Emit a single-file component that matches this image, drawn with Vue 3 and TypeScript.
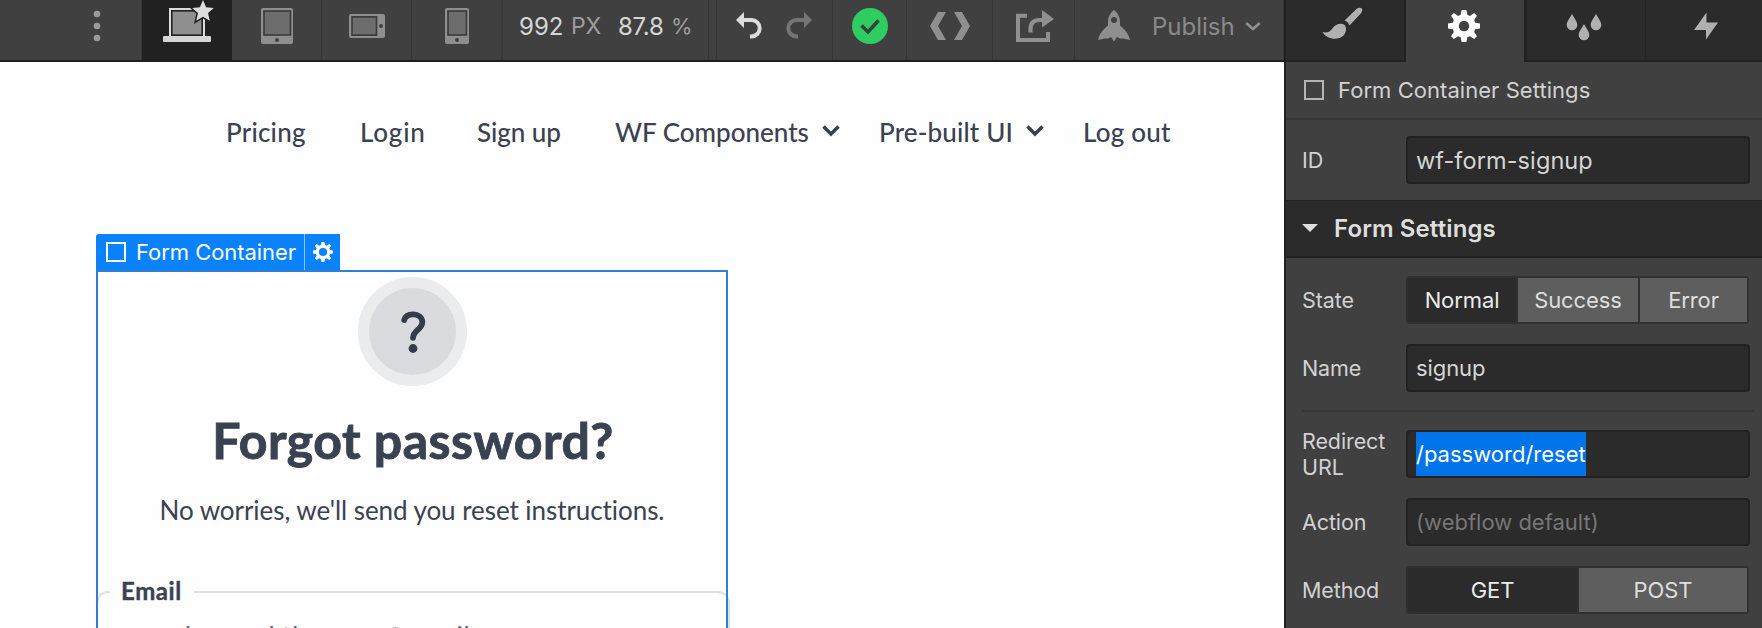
<script setup lang="ts">
interface NavItem {
  label: string
  menu: boolean
}

const navItems: NavItem[] = [
  { label: 'Pricing', menu: false },
  { label: 'Login', menu: false },
  { label: 'Sign up', menu: false },
  { label: 'WF Components', menu: true },
  { label: 'Pre-built UI', menu: true },
  { label: 'Log out', menu: false },
]

const cog =
  'M10.2 0h3.6l.7 3.6 2 .85L19.6 2.3l2.1 2.1-2.1 3.1.85 2L24 10.2v3.6l-3.55.7-.85 2 2.1 3.1-2.1 2.1-3.1-2.1-2 .85-.7 3.55h-3.6l-.7-3.55-2-.85-3.1 2.1-2.1-2.1 2.1-3.1-.85-2L0 13.8v-3.6l3.55-.7.85-2-2.1-3.1 2.1-2.1 3.1 2.15 2-.85z'
</script>

<template>
  <div class="designer">
    <main class="workspace">
      <header class="toolbar">
        <div class="cell more">
          <svg viewBox="0 0 142 60" width="142" height="60" fill="#9a9a9a">
            <circle cx="97" cy="14" r="3.3" /><circle cx="97" cy="26" r="3.3" /><circle cx="97" cy="38" r="3.3" />
          </svg>
        </div>
        <div class="cell device active">
          <svg viewBox="143 0 89 60" width="89" height="60">
            <rect x="170" y="9" width="34" height="28" fill="#8f8f8f" stroke="#dcdcdc" stroke-width="2" />
            <rect x="171.8" y="10.8" width="30.4" height="24.4" fill="none" stroke="#212121" stroke-width="1.6" />
            <rect x="163" y="36" width="48" height="6" rx="1" fill="#d6d6d6" />
            <path d="M203 0l3.1 7.3 7.7.7-5.8 5 1.8 7.8-6.8-4.1-6.8 4.1 1.8-7.8-5.8-5 7.7-.7z" fill="#dedede" stroke="#212121" stroke-width="3" paint-order="stroke" />
          </svg>
        </div>
        <div class="cell device">
          <svg viewBox="232 0 90 60" width="90" height="60">
            <rect x="261" y="8" width="32" height="36" rx="2" fill="#8e8e8e" />
            <rect x="264" y="11" width="26.5" height="24" fill="#6d6d6d" stroke="#3a3a3a" stroke-width="1.6" />
            <circle cx="277" cy="40" r="2" fill="#404040" />
          </svg>
        </div>
        <div class="cell device">
          <svg viewBox="322 0 90 60" width="90" height="60">
            <rect x="349" y="14" width="36" height="24" rx="2" fill="#8e8e8e" />
            <rect x="352" y="16.8" width="24.5" height="18.4" fill="#6d6d6d" stroke="#3a3a3a" stroke-width="1.6" />
            <circle cx="381" cy="26" r="2" fill="#404040" />
          </svg>
        </div>
        <div class="cell device">
          <svg viewBox="412 0 90 60" width="90" height="60">
            <rect x="445" y="8" width="24" height="36" rx="2" fill="#8e8e8e" />
            <rect x="448" y="11" width="18.4" height="24" fill="#6d6d6d" stroke="#3a3a3a" stroke-width="1.6" />
            <circle cx="457" cy="40" r="2" fill="#404040" />
          </svg>
        </div>
        <div class="cell readout">
          <span>992</span><span class="unit">PX</span><span class="zoom">87.8</span><span class="percent">%</span>
        </div>
        <div class="cell history">
          <svg viewBox="717 0 116 60" width="116" height="60">
            <path d="M736 20l8-8v16z" fill="#dcdcdc" />
            <path d="M743 20h8.500a8.200 8.200 0 0 1 0 16.400h-1.500" fill="none" stroke="#dcdcdc" stroke-width="4" />
            <path d="M812 20l-8-8v16z" fill="#757575" />
            <path d="M805 20h-8.500a8.200 8.200 0 0 0 0 16.400h1.500" fill="none" stroke="#757575" stroke-width="4" />
          </svg>
        </div>
        <div class="cell status">
          <svg viewBox="833 0 74 60" width="74" height="60">
            <circle cx="870" cy="26" r="18" fill="#2fcc62" />
            <path d="M861.500 25.500l6.500 6.500 10.500-11.500" fill="none" stroke="#34443a" stroke-width="3.600" />
          </svg>
        </div>
        <div class="cell code">
          <svg viewBox="907 0 86 60" width="86" height="60" fill="#8f8f8f">
            <path d="M938 12h8l-8 14 8 14h-8l-8-14z" /><path d="M962 12h-8l8 14-8 14h8l8-14z" />
          </svg>
        </div>
        <div class="cell share">
          <svg viewBox="993 0 82 60" width="82" height="60">
            <path d="M1027 15.800h-9v24.200h30v-8" fill="none" stroke="#8f8f8f" stroke-width="4" />
            <path d="M1030.500 32.500v-3.500q0-9 9-9h4" fill="none" stroke="#8f8f8f" stroke-width="4.200" />
            <path d="M1042 10l12 9-12 8.500z" fill="#8f8f8f" />
          </svg>
        </div>
        <div class="cell publish">
          <svg viewBox="0 0 40 60" width="40" height="60">
            <path
              fill-rule="evenodd"
              d="M22 10c3.500 2.800 6 7 6 12v3.500c4 3.500 8.500 7.500 10 14.500-3.500-1-7-1.800-10-1.500l-3-1.500-3 4.500-3-4.500-3 1.500c-3-.3-6.500.5-10 1.500 1.500-7 6-11 10-14.500V22c0-5 2.500-9.200 6-12zm0 7a3 3 0 1 0 0 6 3 3 0 0 0 0-6z"
              fill="#8f8f8f"
            />
          </svg>
          <span>Publish</span>
          <svg class="caret" viewBox="0 0 16 60" width="16" height="60">
            <path d="M1.200 23l6.800 6 6.800-6" fill="none" stroke="#8f8f8f" stroke-width="2.600" />
          </svg>
        </div>
      </header>

      <section class="canvas">
        <nav class="site-nav">
          <a v-for="item in navItems" :key="item.label">
            <span>{{ item.label }}</span>
            <svg v-if="item.menu" viewBox="0 0 18 12" width="18" height="12">
              <path d="M1.500 1.500l7.500 7.500 7.500-7.500" fill="none" stroke="#3a4252" stroke-width="3.600" />
            </svg>
          </a>
        </nav>

        <div class="selection">
          <div class="tag">
            <i class="square"></i>
            <span class="tag-name">Form Container</span>
            <span class="tag-cog">
              <svg viewBox="0 0 24 24" width="20" height="20">
                <path :d="cog" fill="#fff" /><circle cx="12" cy="12" r="4.900" fill="#0a82fb" />
              </svg>
            </span>
          </div>
          <div class="form-box">
            <div class="badge">
              <svg viewBox="0 0 40 50" width="40" height="50">
                <path d="M11.200 13C12.200 9.200 15.500 7.300 19.800 7.300c5.500 0 9.500 3.300 9.500 7.900 0 7-9.300 8.500-9.300 15.600" fill="none" stroke="#343c4c" stroke-width="5.800" stroke-linecap="round" />
                <circle cx="20" cy="41.500" r="4.400" fill="#343c4c" />
              </svg>
            </div>
            <h1>Forgot password?</h1>
            <p>No worries, we'll send you reset instructions.</p>
            <div class="field">
              <label>Email</label>
              <div class="placeholder">e.g. howard.thurman@gmail.com</div>
            </div>
          </div>
        </div>
      </section>
    </main>

    <aside class="panel">
      <div class="tabs">
        <div class="tab">
          <svg viewBox="1286 0 118 60" width="118" height="60" fill="#b0b0b0">
            <path d="M1344.500 20.500L1356.500 9c2-1.600 4.300-1.600 5.300-.4 1 1.200.3 3-.8 4.600L1349.500 25.500q-1.500-4-5-5z" />
            <path d="M1322.500 32c3.500 1 7 .5 9.500-3 2.500-4.500 8-6.500 12-4.500 3 2 2.500 8-.5 11-5.500 5.500-17 4-21-3.500z" />
          </svg>
        </div>
        <div class="tab selected">
          <svg viewBox="1406 0 118 60" width="118" height="60">
            <svg x="1448" y="10" width="32" height="32" viewBox="0 0 24 24">
              <path :d="cog" fill="#fff" /><circle cx="12" cy="12" r="3.900" fill="#404040" />
            </svg>
          </svg>
        </div>
        <div class="tab">
          <svg viewBox="1527 0 118 60" width="118" height="60" fill="#b0b0b0">
            <path d="M1572 14c2.500 4.500 5.300 7.500 5.300 11a5.300 5.300 0 0 1-10.600 0c0-3.500 2.800-6.500 5.300-11z" />
            <path d="M1596 14c2.500 4.500 5.300 7.500 5.300 11a5.300 5.300 0 0 1-10.600 0c0-3.500 2.800-6.500 5.300-11z" />
            <path d="M1584 24c2.500 4.500 5.300 7.500 5.300 11a5.300 5.300 0 0 1-10.600 0c0-3.500 2.800-6.500 5.300-11z" />
          </svg>
        </div>
        <div class="tab">
          <svg viewBox="1646 0 116 60" width="116" height="60" fill="#b0b0b0">
            <path d="M1706.500 12.500v10h11.500l-12 17v-9.500h-12z" />
          </svg>
        </div>
      </div>

      <div class="title"><i class="square"></i><span>Form Container Settings</span></div>

      <div class="row id-row"><label>ID</label><div class="input large">wf-form-signup</div></div>

      <div class="section-head"><i class="triangle"></i><span>Form Settings</span></div>

      <div class="rows">
        <div class="row">
          <label>State</label>
          <div class="segments state">
            <span class="on">Normal</span><span>Success</span><span>Error</span>
          </div>
        </div>
        <div class="row"><label>Name</label><div class="input">signup</div></div>
        <div class="row split">
          <label>Redirect URL</label>
          <div class="input"><mark>/password/reset</mark></div>
        </div>
        <div class="row"><label>Action</label><div class="input empty">(webflow default)</div></div>
        <div class="row">
          <label>Method</label>
          <div class="segments method"><span class="on">GET</span><span>POST</span></div>
        </div>
      </div>
    </aside>
  </div>
</template>

<style>
html,
body {
  overflow: hidden;
}
</style>

<style scoped>
* {
  box-sizing: border-box;
}
svg {
  display: block;
  flex: none;
}
.designer {
  display: flex;
  width: 1762px;
  height: 628px;
  overflow: hidden;
  font-family: Inter, 'Liberation Sans', sans-serif;
}
.workspace {
  width: 1284px;
  display: flex;
  flex-direction: column;
}

.toolbar {
  display: grid;
  grid-template-columns: 142px 90px 90px 90px 90px 215px 116px 74px 86px 82px 209px;
  height: 62px;
  flex: none;
  background: #404040;
  border-bottom: 2px solid #201f21;
}
.cell {
  height: 60px;
  border-right: 1px solid #373737;
  overflow: hidden;
}
.device.active {
  background: #212121;
  border-right: 0;
  padding-left: 1px;
}
.readout {
  display: grid;
  grid-template-columns: 52px 47px 55px 1fr;
  width: 215px;
  height: 60px;
  padding: 0 0 8px 16px;
  align-items: center;
  font-size: 24px;
  color: #d6d6d6;
  border-left: 1px solid #373737;
  box-shadow: inset -7px 0 #404040, inset -8px 0 #373737;
}
.readout .unit {
  font-size: 23px;
  letter-spacing: -0.3px;
  color: #9c9c9c;
}
.readout .zoom {
  letter-spacing: -0.3px;
}
.readout .percent {
  font-size: 22px;
  margin-left: -2px;
  color: #9c9c9c;
}
.publish {
  display: flex;
  padding-left: 17px;
  font-size: 24px;
  line-height: 53px;
  color: #8a8a8a;
}
.publish span {
  margin-left: 20px;
}
.caret {
  margin-left: 10px;
}

.canvas {
  flex: 1;
  min-height: 0;
  background: #fefefe;
  font-family: Lato, 'Open Sans', sans-serif;
  color: #3a4252;
}
.site-nav {
  display: grid;
  grid-template-columns: 134px 117px 138px 264px 204px 1fr;
  height: 140px;
  padding-left: 226px;
  align-items: center;
  font-size: 26px;
}
.site-nav a {
  display: flex;
  align-items: center;
  gap: 13px;
  font-weight: 500;
  letter-spacing: 0.2px;
  white-space: nowrap;
}
.site-nav a svg {
  margin-top: -2px;
}
.site-nav a:nth-child(2) {
  letter-spacing: 0.8px;
}
.site-nav a:nth-child(3) {
  letter-spacing: -0.05px;
}
.site-nav a:nth-child(4) {
  letter-spacing: 0;
}
.site-nav a:nth-child(5) {
  letter-spacing: 0.15px;
}

.selection {
  width: 632px;
  margin: 32px 0 0 96px;
}
.tag {
  display: flex;
  align-items: center;
  width: 244px;
  height: 36px;
  background: #0a82fb;
  border-radius: 3px 0 0 0;
  color: #fff;
  font-family: Inter, 'Liberation Sans', sans-serif;
  font-size: 22px;
}
.square {
  flex: none;
  width: 20px;
  height: 20px;
  border: 2px solid #fff;
}
.tag .square {
  margin-left: 10px;
}
.tag-name {
  width: 168px;
  margin-left: 10px;
  letter-spacing: -0.05px;
  white-space: nowrap;
}
.tag-cog {
  flex: 1;
  height: 36px;
  display: flex;
  align-items: center;
  justify-content: center;
  border-left: 1.5px solid #8cc4fd;
}
/* The outline is drawn above the contents, so it stays over the field's edge. */
.form-box {
  position: relative;
  height: 420px;
  padding-top: 2px;
  display: flex;
  flex-direction: column;
  align-items: center;
}
.form-box::after {
  content: '';
  position: absolute;
  inset: 0;
  border: 2px solid #2f80d3;
}
.badge {
  flex: none;
  width: 109px;
  height: 109px;
  margin: 5px 0 0 1px;
  border: 11px solid #ebecee;
  border-radius: 50%;
  background: #d9dbde;
  display: flex;
  align-items: center;
  justify-content: center;
}
h1 {
  margin: 24px 0 0 2px;
  font-size: 50px;
  line-height: 60px;
  font-weight: 700;
  letter-spacing: 0.5px;
  white-space: nowrap;
  -webkit-text-stroke: 0.9px #3a4252;
}
p {
  margin: 24px 0 0;
  font-size: 26px;
  line-height: 32px;
  letter-spacing: -0.06px;
  white-space: nowrap;
}
.field {
  width: 634px;
  height: 80px;
  flex: none;
  margin: 65px 0 0 2px;
  border: 2px solid #dfe0e1;
  border-radius: 12px;
  padding-left: 12px;
}
.field label {
  display: block;
  width: 84px;
  height: 30px;
  margin-top: -17px;
  padding-left: 11px;
  line-height: 30px;
  font-size: 24px;
  font-weight: 700;
  letter-spacing: 0.6px;
  -webkit-text-stroke: 0.4px #3a4252;
  background: #fefefe;
}
.placeholder {
  margin: 15px 0 0 25px;
  font-size: 26px;
  line-height: 30px;
  letter-spacing: 0.75px;
  color: #5d6470;
}

.panel {
  width: 478px;
  border-left: 2px solid #212121;
  background: #404040;
  color: #d2d2d2;
  font-size: 21.5px;
}
.tabs {
  display: grid;
  grid-template-columns: 118px 122px 119px 117px;
  height: 62px;
}
.tab {
  background: #2b2b2b;
  border-bottom: 2px solid #212121;
  height: 62px;
  overflow: hidden;
}
.tab + .tab {
  border-left: 1px solid #242424;
}
.tab.selected {
  background: #404040;
  border: solid #212121;
  border-width: 0 2px 0 2px;
}
.title {
  display: flex;
  align-items: center;
  height: 58px;
  padding: 0 0 0 18px;
  gap: 14px;
  border-bottom: 2px solid #383838;
  font-size: 22px;
  letter-spacing: 0.05px;
  white-space: nowrap;
}
.title .square {
  border-color: #b5b5b5;
}
.row {
  display: grid;
  grid-template-columns: 104px 344px;
  height: 48px;
  margin-left: 16px;
  align-items: center;
  letter-spacing: -0.1px;
}
.row label {
  width: 90px;
  line-height: 26px;
}
.id-row {
  margin-top: 16px;
}
.input {
  display: flex;
  align-items: center;
  height: 48px;
  padding: 0 8px;
  border: 2px solid #222;
  border-radius: 4px;
  background: #2b2b2b;
  color: #d6d6d6;
  font-size: 22px;
}
.input.large {
  font-size: 23.5px;
  letter-spacing: 0.1px;
}
.input.empty {
  color: #767676;
  letter-spacing: 0;
}
mark {
  height: 44px;
  line-height: 44px;
  letter-spacing: 0;
  background: #0074e8;
  color: #fff;
}
.section-head {
  display: flex;
  align-items: center;
  height: 58px;
  margin-top: 16px;
  padding: 0 0 1px 16px;
  background: #2b2b2b;
  border: solid #212121;
  border-width: 1px 0 2px;
  font-size: 24px;
  font-weight: 600;
  letter-spacing: 0.1px;
  color: #dedede;
}
.triangle {
  border: 8px solid transparent;
  border-top-color: #dedede;
  border-bottom: 0;
  margin-right: 16px;
}
.rows {
  display: flex;
  flex-direction: column;
  gap: 20px;
  padding-top: 18px;
}
.split {
  height: 68px;
  margin: -2px 8px 0 16px;
  border-top: 2px solid #383838;
  align-items: start;
  padding-top: 18px;
}
.split label {
  margin-top: -2px;
}
.segments {
  display: grid;
  width: 343px;
  height: 48px;
  padding: 2px;
  gap: 2px;
  background: #303030;
  border-radius: 4px;
  color: #dedede;
}
.state {
  grid-template-columns: 108px 120px 1fr;
}
.method {
  grid-template-columns: 169px 1fr;
}
.segments span {
  display: flex;
  align-items: center;
  justify-content: center;
  background: #5e5e5e;
  font-size: 22px;
}
.segments .on {
  background: #2b2b2b;
  color: #ececec;
}
</style>
